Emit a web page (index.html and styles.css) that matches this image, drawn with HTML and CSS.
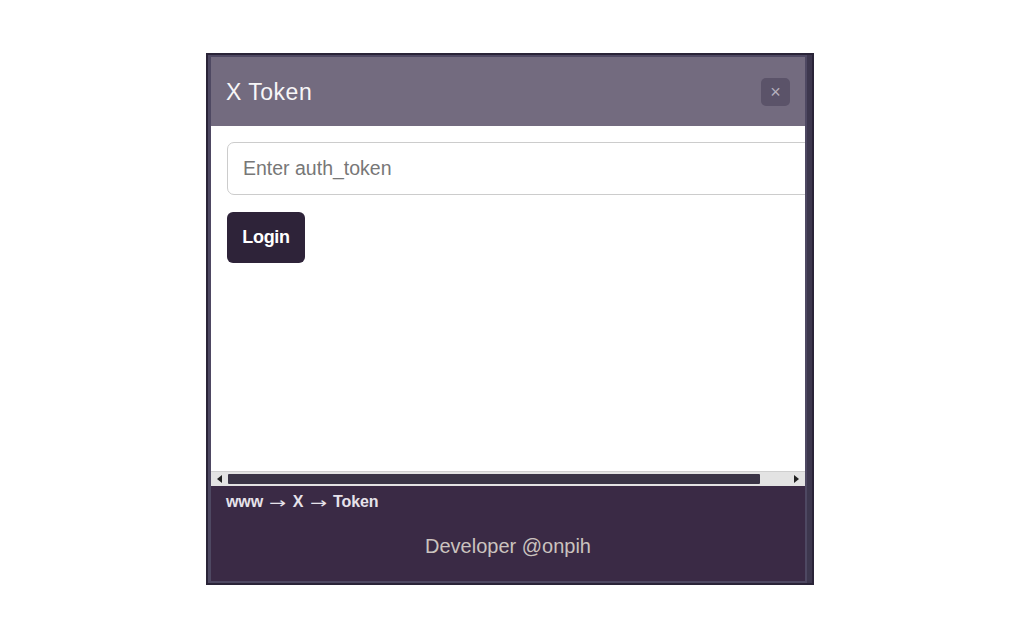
FILE: index.html
```html
<!DOCTYPE html>
<html lang="en">
<head>
<meta charset="utf-8">
<title>X Token</title>
<link rel="stylesheet" href="styles.css">
</head>
<body>
<div class="frame">
  <div class="popup">
    <header class="header">
      <h1 class="title">X Token</h1>
      <button class="close" type="button" aria-label="Close">×</button>
    </header>
    <main class="content">
      <div class="scroll-inner">
        <input class="token-input" type="text" placeholder="Enter auth_token">
        <button class="login" type="button">Login</button>
      </div>
    </main>
    <div class="hscroll">
      <span class="arrow arrow-left"></span>
      <div class="track"><div class="thumb"></div></div>
      <span class="arrow arrow-right"></span>
    </div>
    <footer class="footer">
      <div class="crumbs">www <span class="sep">→</span> X <span class="sep">→</span> Token</div>
      <div class="dev">Developer @onpih</div>
    </footer>
  </div>
</div>
</body>
</html>
```
FILE: styles.css
```css
* { box-sizing: border-box; }

html, body {
  margin: 0;
  padding: 0;
  background: #ffffff;
  font-family: "Liberation Sans", Arial, sans-serif;
}

body {
  padding-top: 53px;
}

.frame {
  width: 608px;
  height: 532px;
  margin: 0 auto;
  border: 2px solid #2a2438;
  background: #4e4862;
  padding: 2px 7px 2px 3px;
  box-shadow: inset -5px 0 0 #3d374e;
}

.popup {
  display: flex;
  flex-direction: column;
  height: 100%;
}

.header {
  height: 69px;
  flex: none;
  background: #736b7f;
  display: flex;
  align-items: center;
  justify-content: space-between;
  padding: 0 15px 0 15px;
}

.title {
  margin: 0;
  font-size: 23px;
  font-weight: normal;
  color: #f7f6f8;
  letter-spacing: 0.5px;
  margin-top: 1px;
}

.close {
  width: 29px;
  height: 28px;
  border: none;
  border-radius: 5px;
  background: #5b5369;
  color: #b6b0bd;
  font-family: "Liberation Sans", Arial, sans-serif;
  font-size: 18px;
  line-height: 28px;
  padding: 0;
  margin-top: 1px;
}

.content {
  height: 345px;
  flex: none;
  background: #ffffff;
  overflow: hidden;
}

.scroll-inner {
  width: 627px;
  padding: 16px 16px 0 16px;
  display: flex;
  flex-direction: column;
  align-items: flex-start;
  gap: 17px;
}

.token-input {
  width: 100%;
  height: 53px;
  border: 1px solid #cccccc;
  border-radius: 7px;
  padding: 0 15px;
  font-family: "Liberation Sans", Arial, sans-serif;
  font-size: 19.5px;
  color: #333;
  background: #fff;
  outline: none;
}

.token-input::placeholder {
  color: #777777;
}

.login {
  width: 78px;
  height: 51px;
  border: none;
  border-radius: 6px;
  background: #2e2339;
  color: #ffffff;
  font-family: "Liberation Sans", Arial, sans-serif;
  font-size: 18px;
  font-weight: bold;
  letter-spacing: -0.3px;
  padding: 0;
}

.hscroll {
  height: 15px;
  flex: none;
  background: #e3e3e3;
  display: flex;
  align-items: center;
  border-top: 1px solid #cfcfcf;
}

.arrow {
  width: 17px;
  height: 14px;
  flex: none;
  display: flex;
  align-items: center;
  justify-content: center;
}

.arrow-left::before {
  content: "";
  border-top: 4px solid transparent;
  border-bottom: 4px solid transparent;
  border-right: 5px solid #202020;
}

.arrow-right::before {
  content: "";
  border-top: 4px solid transparent;
  border-bottom: 4px solid transparent;
  border-left: 5px solid #202020;
}

.track {
  flex: 1;
  height: 100%;
  display: flex;
  align-items: center;
}

.thumb {
  width: 532px;
  height: 10px;
  background: #3a3446;
  border-radius: 1px;
}

.footer {
  flex: 1;
  background: #3a2a45;
  padding: 6px 15px 0 15px;
}

.crumbs {
  font-size: 16px;
  font-weight: bold;
  line-height: 20px;
  color: #e6e2ea;
  letter-spacing: -0.1px;
}

.sep {
  display: inline-block;
  width: 21px;
  text-align: center;
  font-family: "DejaVu Sans", sans-serif;
  font-weight: normal;
  font-size: 15px;
  letter-spacing: 0;
  transform: scaleX(1.35) translateY(1px);
}

.dev {
  margin-top: 22px;
  text-align: center;
  font-size: 20px;
  line-height: 24px;
  color: #cbc3bf;
}
```
